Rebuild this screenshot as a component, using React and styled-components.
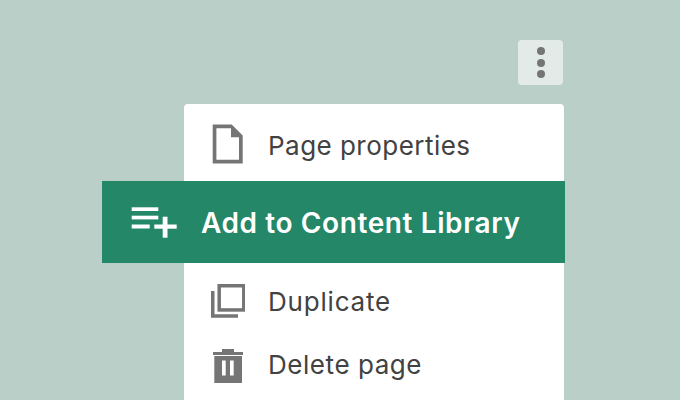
import React from "react";
import styled, { createGlobalStyle } from "styled-components";

const Global = createGlobalStyle`
  html, body { margin: 0; padding: 0; }
  body { width: 680px; height: 400px; overflow: hidden; background: #b9cfc7; font-family: "Inter", "Liberation Sans", sans-serif; }
`;
const Page = styled.div`
  width: 680px; height: 400px; overflow: hidden; background: #b9cfc7;
  display: flex; flex-direction: column; padding: 40px 116px 0 184px; box-sizing: border-box;
`;
const Kebab = styled.button`
  align-self: flex-end; margin-right: 1px; width: 45px; height: 45px; padding: 0; border: 0; border-radius: 4px;
  background: #e2ebe8; display: flex; flex-direction: column; align-items: center; justify-content: center; gap: 3.5px;
`;
const Dot = styled.span`
  width: 8px; height: 8px; border-radius: 50%; background: #757575;
`;
const Menu = styled.div`
  margin-top: 19px; width: 380px; flex: 1; background: #fff; border-radius: 4px 4px 0 0;
  display: flex; flex-direction: column;
`;
const Row = styled.div`
  display: flex; align-items: center; height: ${p => p.$h}px; padding-left: 27px;
`;
const IconSlot = styled.span`
  width: 57px; flex: none; display: flex; align-items: center;
`;
const Label = styled.span`
  font-size: 26px; color: #424242; letter-spacing: ${p => p.$track}px; line-height: 1; white-space: nowrap; padding-top: ${p => p.$nudge}px;
`;
const Band = styled.div`
  margin: 0 -1px 0 -82px; height: 82px; background: #238768; display: flex; align-items: center; padding-left: 29px;
`;
const BandSlot = styled.span`
  width: 70px; flex: none; display: flex; align-items: center;
`;
const BandLabel = styled.span`
  font-size: 28px; font-weight: 600; color: #fff; letter-spacing: 0.6px; white-space: nowrap; line-height: 1; padding-top: 2px;
`;
const Spacer = styled.div`
  height: ${p => p.$h}px;
`;

export default function App() {
  return (
    <Page>
      <Global />
      <Kebab aria-label="More"><Dot /><Dot /><Dot /></Kebab>
      <Menu>
        <Row $h={77}>
          <IconSlot>
            <svg width="33" height="42" viewBox="0 0 33 42" fill="#757575">
              <path fillRule="evenodd" d="M1.700 2.500H20.700L31.700 13.500V41.500H1.700Z M5.400 6.200V37.800H28V15.200H20V6.200Z" />
            </svg>
          </IconSlot>
          <Label $nudge={6} $track={0.47}>Page properties</Label>
        </Row>
        <Band>
          <BandSlot>
            <svg width="48" height="32" viewBox="0 0 48 32" fill="#fff">
              <rect x="0.700" y="1.300" width="26.600" height="3.700" />
              <rect x="0.700" y="9.700" width="26.600" height="3.700" />
              <rect x="0.700" y="18.500" width="18" height="4" />
              <rect x="23.300" y="18.500" width="22.400" height="4.200" />
              <rect x="31.700" y="10.700" width="4.800" height="21" />
            </svg>
          </BandSlot>
          <BandLabel>Add to Content Library</BandLabel>
        </Band>
        <Spacer $h={7} />
        <Row $h={63}>
          <IconSlot>
            <svg width="34" height="35" viewBox="0 0 34 35" fill="none" stroke="#757575" strokeWidth="3.500">
              <rect x="8.200" y="1.750" width="24.600" height="24.200" />
              <path d="M1.750 7V32H27" />
            </svg>
          </IconSlot>
          <Label $nudge={0} $track={0.8}>Duplicate</Label>
        </Row>
        <Row $h={63}>
          <IconSlot>
            <svg width="33" height="37" viewBox="0 0 33 37" fill="#757575">
              <path d="M2 6H11V3H23V6H32V9H2Z" />
              <path fillRule="evenodd" d="M3.300 10H31V37H3.300Z M11 14.500V29.500H14.700V14.500Z M19 14.500V29.500H22.700V14.500Z" />
            </svg>
          </IconSlot>
          <Label $nudge={0} $track={0.55}>Delete page</Label>
        </Row>
      </Menu>
    </Page>
  );
}
